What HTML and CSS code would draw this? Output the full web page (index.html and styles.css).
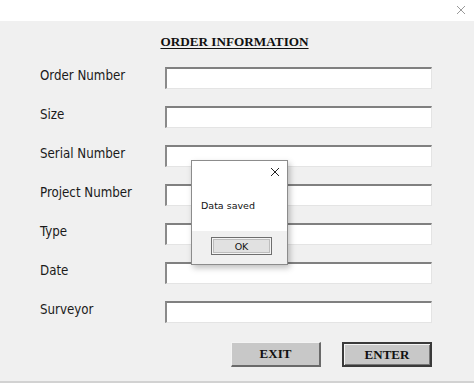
FILE: index.html
```html
<!DOCTYPE html>
<html>
<head>
<meta charset="utf-8">
<link rel="stylesheet" href="styles.css">
</head>
<body>
<div class="titlebar">
  <svg class="win-close" width="10" height="10" viewBox="0 0 10 10"><path d="M1 1L9 9M9 1L1 9" stroke="#9a9a9a" stroke-width="1" fill="none"/></svg>
</div>
<div class="panel">
  <h1 class="title">ORDER INFORMATION</h1>
  <div class="form">
    <label class="lbl">Order Number</label><div class="field"></div>
    <label class="lbl">Size</label><div class="field"></div>
    <label class="lbl">Serial Number</label><div class="field"></div>
    <label class="lbl">Project Number</label><div class="field"></div>
    <label class="lbl">Type</label><div class="field"></div>
    <label class="lbl">Date</label><div class="field"></div>
    <label class="lbl">Surveyor</label><div class="field"></div>
  </div>
  <div class="actions">
    <div class="btn">EXIT</div>
    <div class="btn btn-default">ENTER</div>
  </div>
</div>
<div class="msgbox">
  <div class="msg-body">
    <svg class="msg-close" width="10" height="10" viewBox="0 0 10 10"><path d="M1 1L9 9M9 1L1 9" stroke="#222" stroke-width="1" fill="none"/></svg>
    <div class="msg-text">Data saved</div>
  </div>
  <div class="msg-foot">
    <div class="ok">OK</div>
  </div>
</div>
</body>
</html>
```
FILE: styles.css
```css
html, body {
  margin: 0;
  padding: 0;
  background: #ffffff;
  width: 474px;
  height: 383px;
  overflow: hidden;
}
body {
  position: relative;
  font-family: "DejaVu Sans", sans-serif;
}
.titlebar {
  height: 21px;
  display: flex;
  justify-content: flex-end;
  align-items: center;
  padding-right: 8px;
  box-sizing: border-box;
}
.win-close {
  display: block;
  margin-top: -1px;
}
.panel {
  background: #f0f0f0;
  height: 359px;
  border-bottom: 3px solid #d2d2d2;
  box-sizing: content-box;
  padding-top: 1px;
}
.title {
  margin: 0;
  height: 45px;
  box-sizing: border-box;
  padding-top: 12px;
  text-align: center;
  font-family: "Liberation Serif", serif;
  font-weight: bold;
  font-size: 13.2px;
  line-height: 16px;
  text-decoration: underline;
  text-underline-offset: 2px;
  color: #111;
  padding-right: 5px;
}
.form {
  display: grid;
  grid-template-columns: 125px 267px;
  row-gap: 17px;
  padding-left: 40px;
  align-items: start;
}
.lbl {
  font-family: "DejaVu Sans Condensed", "DejaVu Sans", sans-serif;
  font-size: 13.2px;
  line-height: 16px;
  padding-top: 1px;
  color: #1a1a1a;
}
.field {
  height: 22px;
  box-sizing: border-box;
  background: #fff;
  border-top: 2px solid #808080;
  border-left: 2px solid #8a8a8a;
  border-right: 1px solid #e4e4e4;
  border-bottom: 1px solid #e4e4e4;
}
.actions {
  display: flex;
  gap: 21px;
  padding-left: 231px;
  margin-top: 19px;
}
.btn {
  width: 90px;
  height: 25px;
  box-sizing: border-box;
  background: #c8c8c8;
  border-top: 1px solid #f4f4f4;
  border-left: 1px solid #f4f4f4;
  border-right: 2px solid #6a6a6a;
  border-bottom: 2px solid #6a6a6a;
  font-family: "Liberation Serif", serif;
  font-weight: bold;
  font-size: 13px;
  color: #111;
  display: flex;
  align-items: center;
  justify-content: center;
}
.btn-default {
  border: 2px solid #3a3a3a;
  box-shadow: inset 1px 1px 0 #f4f4f4, inset -1px -1px 0 #777;
}
.msgbox {
  position: absolute;
  left: 191px;
  top: 160px;
  width: 97px;
  height: 105px;
  box-sizing: border-box;
  border: 1px solid #8c8c8c;
  background: #fff;
  box-shadow: 2px 3px 6px rgba(0,0,0,0.25);
  display: flex;
  flex-direction: column;
}
.msg-body {
  flex: 1;
  position: relative;
  background: #fff;
}
.msg-close {
  position: absolute;
  right: 7px;
  top: 6px;
}
.msg-text {
  padding-left: 9px;
  padding-top: 39px;
  font-family: "DejaVu Sans", sans-serif;
  font-size: 9.5px;
  line-height: 12px;
  color: #111;
}
.msg-foot {
  height: 33px;
  background: #f0f0f0;
  display: flex;
  justify-content: center;
  padding-top: 6px;
  box-sizing: border-box;
}
.ok {
  width: 61px;
  height: 18px;
  box-sizing: border-box;
  border: 1px solid #6e6e6e;
  box-shadow: inset 0 0 0 1px #f4f4f4, inset 0 0 0 2px #bdbdbd;
  background: #e1e1e1;
  font-family: "DejaVu Sans", sans-serif;
  font-size: 9.5px;
  display: flex;
  align-items: center;
  justify-content: center;
  color: #111;
  margin-left: 4px;
}
```
